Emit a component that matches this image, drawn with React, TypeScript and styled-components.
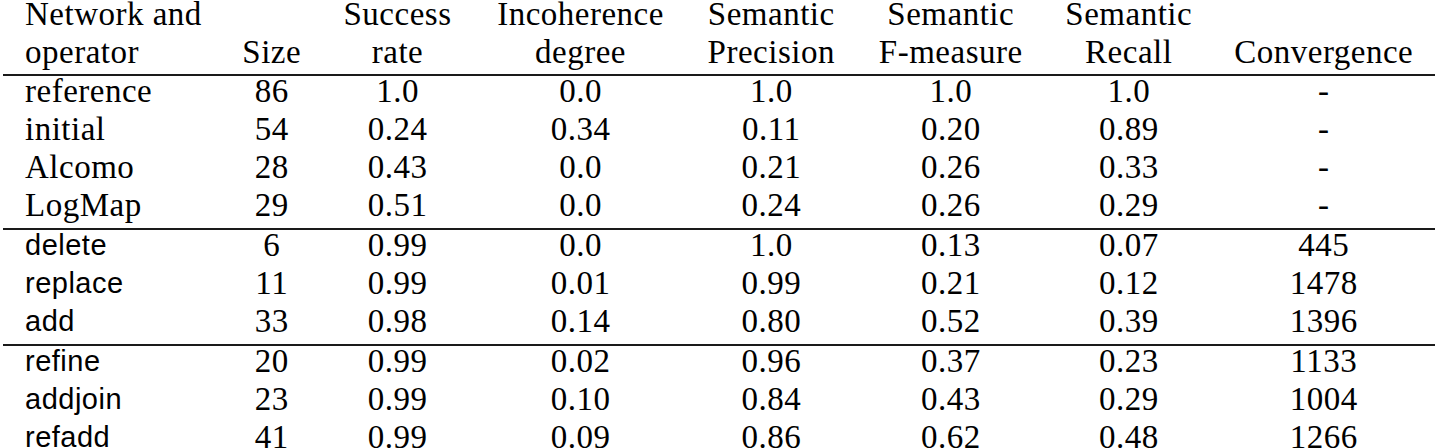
import React from "react";
import styled, { createGlobalStyle } from "styled-components";

const GlobalStyle = createGlobalStyle`
  html, body {
    margin: 0;
    padding: 0;
    background: #ffffff;
  }
  body {
    font-family: "Liberation Serif", "Times New Roman", serif;
    color: #000;
  }
`;

const Page = styled.div`
  padding: 0 5px 0 3px;
`;

const Table = styled.table`
  border-collapse: collapse;
  table-layout: fixed;
  width: 1432px;
  font-family: "Liberation Serif", "Times New Roman", serif;
  font-size: 33px;
  letter-spacing: 0.5px;
  color: #000;
`;

const HeadCell = styled.th<{ $left?: boolean }>`
  font-weight: normal;
  padding: 0 0 3px ${(p) => (p.$left ? "22px" : "0")};
  text-align: ${(p) => (p.$left ? "left" : "center")};
  vertical-align: bottom;
  white-space: nowrap;
`;

const HeadTop = styled.div`
  line-height: 28px;
  height: 28px;
`;

const HeadBottom = styled.div`
  line-height: 38px;
  margin-top: 5px;
`;

const HeadRow = styled.tr`
  border-bottom: 2px solid #1a1a1a;
`;

const BodyRow = styled.tr<{ $rule?: boolean }>`
  border-top: ${(p) => (p.$rule ? "2px solid #1a1a1a" : "0")};
`;

const Cell = styled.td`
  line-height: 30px;
  padding: 0 0 8px 0;
  text-align: center;
  white-space: nowrap;
`;

const NameCell = styled.td<{ $sans?: boolean }>`
  line-height: 30px;
  padding: 0 0 8px 22px;
  text-align: left;
  white-space: nowrap;
  font-family: ${(p) =>
    p.$sans
      ? `"Liberation Sans", Arial, Helvetica, sans-serif`
      : `"Liberation Serif", "Times New Roman", serif`};
  font-size: ${(p) => (p.$sans ? "29px" : "33px")};
`;

const widths = [220.5, 96.5, 155, 211, 170.5, 188.5, 167.5, 222.5];

const headers: [string, string][] = [
  ["Network and", "operator"],
  ["", "Size"],
  ["Success", "rate"],
  ["Incoherence", "degree"],
  ["Semantic", "Precision"],
  ["Semantic", "F-measure"],
  ["Semantic", "Recall"],
  ["", "Convergence"],
];

type Row = { name: string; sans: boolean; rule: boolean; values: string[] };

const rows: Row[] = [
  { name: "reference", sans: false, rule: false, values: ["86", "1.0", "0.0", "1.0", "1.0", "1.0", "-"] },
  { name: "initial", sans: false, rule: false, values: ["54", "0.24", "0.34", "0.11", "0.20", "0.89", "-"] },
  { name: "Alcomo", sans: false, rule: false, values: ["28", "0.43", "0.0", "0.21", "0.26", "0.33", "-"] },
  { name: "LogMap", sans: false, rule: false, values: ["29", "0.51", "0.0", "0.24", "0.26", "0.29", "-"] },
  { name: "delete", sans: true, rule: true, values: ["6", "0.99", "0.0", "1.0", "0.13", "0.07", "445"] },
  { name: "replace", sans: true, rule: false, values: ["11", "0.99", "0.01", "0.99", "0.21", "0.12", "1478"] },
  { name: "add", sans: true, rule: false, values: ["33", "0.98", "0.14", "0.80", "0.52", "0.39", "1396"] },
  { name: "refine", sans: true, rule: true, values: ["20", "0.99", "0.02", "0.96", "0.37", "0.23", "1133"] },
  { name: "addjoin", sans: true, rule: false, values: ["23", "0.99", "0.10", "0.84", "0.43", "0.29", "1004"] },
  { name: "refadd", sans: true, rule: false, values: ["41", "0.99", "0.09", "0.86", "0.62", "0.48", "1266"] },
];

export default function App() {
  return (
    <>
      <GlobalStyle />
      <Page>
        <Table>
          <colgroup>
            {widths.map((w, i) => (
              <col key={i} style={{ width: `${w}px` }} />
            ))}
          </colgroup>
          <thead>
            <HeadRow>
              {headers.map(([a, b], i) => (
                <HeadCell key={i} $left={i === 0}>
                  <HeadTop>{a}</HeadTop>
                  <HeadBottom>{b}</HeadBottom>
                </HeadCell>
              ))}
            </HeadRow>
          </thead>
          <tbody>
            {rows.map((r) => (
              <BodyRow key={r.name} $rule={r.rule}>
                <NameCell $sans={r.sans}>{r.name}</NameCell>
                {r.values.map((v, i) => (
                  <Cell key={i}>{v}</Cell>
                ))}
              </BodyRow>
            ))}
          </tbody>
        </Table>
      </Page>
    </>
  );
}
